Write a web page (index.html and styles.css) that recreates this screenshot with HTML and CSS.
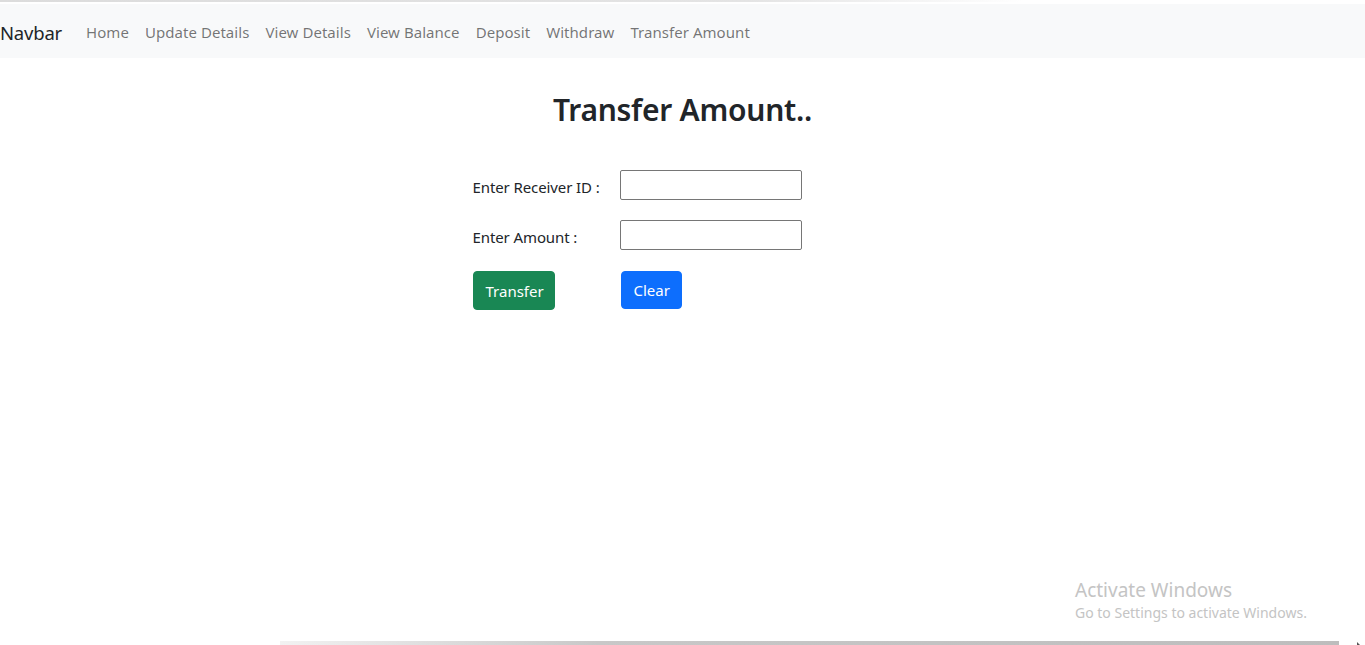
FILE: index.html
```html
<!DOCTYPE html>
<html lang="en">
<head>
<meta charset="utf-8">
<title>Transfer Amount</title>
<link rel="stylesheet" href="styles.css">
</head>
<body>
<div class="topline"></div>
<nav class="navbar">
  <a class="brand" href="#">Navbar</a>
  <ul class="nav-links">
    <li><a href="#">Home</a></li>
    <li><a href="#">Update Details</a></li>
    <li><a href="#">View Details</a></li>
    <li><a href="#">View Balance</a></li>
    <li><a href="#">Deposit</a></li>
    <li><a href="#">Withdraw</a></li>
    <li><a href="#">Transfer Amount</a></li>
  </ul>
</nav>
<main class="content">
  <h2 class="title">Transfer Amount..</h2>
  <form class="transfer-form">
    <label class="lbl" for="rid">Enter Receiver ID :</label>
    <input class="field" id="rid" type="text">
    <label class="lbl" for="amt">Enter Amount :</label>
    <input class="field" id="amt" type="text">
    <div class="btn-cell"><button type="button" class="btn btn-green">Transfer</button></div>
    <div class="btn-cell"><button type="button" class="btn btn-blue">Clear</button></div>
  </form>
</main>
<div class="watermark">
  <div class="wm-title">Activate Windows</div>
  <div class="wm-sub">Go to Settings to activate Windows.</div>
</div>
<div class="hscroll"><div class="hthumb"></div><span class="harrow"></span></div>
</body>
</html>
```
FILE: styles.css
```css
html, body {
  margin: 0;
  padding: 0;
  height: 100%;
  overflow: hidden;
}
body {
  font-family: "Noto Sans", "Open Sans", sans-serif;
  color: #212529;
  background: #fff;
  position: relative;
}
.topline {
  height: 2px;
  margin-bottom: 2px;
  background: linear-gradient(to right, #dcdcdc 0%, #e4e4e4 55%, rgba(255,255,255,0) 75%);
}
.navbar {
  height: 54px;
  background: #f8f9fa;
  display: flex;
  align-items: center;
  padding-top: 2px;
  box-sizing: border-box;
}
.brand {
  font-size: 18.5px;
  color: #212529;
  text-decoration: none;
  margin-right: 16px;
  letter-spacing: -0.2px;
}
.nav-links {
  list-style: none;
  display: flex;
  margin: 0;
  padding: 0;
}
.nav-links a {
  display: block;
  padding: 0 8px;
  font-size: 15px;
  color: rgba(0,0,0,0.55);
  text-decoration: none;
  letter-spacing: 0.05px;
}
.content {
  padding-top: 34px;
}
.title {
  margin: 0;
  text-align: center;
  font-size: 30px;
  font-weight: 600;
  letter-spacing: -0.25px;
  line-height: 1.2;
}
.transfer-form {
  width: 420px;
  margin: 42px auto 0;
  display: grid;
  grid-template-columns: 147px 182px;
  grid-template-rows: 30px 30px 39px;
  row-gap: 20px;
  align-items: center;
}
.lbl {
  font-size: 15px;
  padding-top: 4px;
  letter-spacing: -0.1px;
}
.field {
  box-sizing: border-box;
  width: 182px;
  height: 30px;
  border: 1px solid #767676;
  border-radius: 2px;
  background: #fff;
  margin: 0;
}
.btn-cell {
  align-self: start;
}
.btn {
  font-family: inherit;
  font-size: 15px;
  color: #fff;
  border: 1px solid transparent;
  border-radius: 4px;
  height: 39px;
  padding: 0 12px;
  cursor: pointer;
}
.btn-green {
  background: #198754;
  border-color: #198754;
  width: 82px;
  margin-top: 1px;
}
.btn-blue {
  background: #0d6efd;
  border-color: #0d6efd;
  width: 61px;
  height: 38px;
  margin-left: 1px;
  margin-top: 1px;
}
.watermark {
  position: absolute;
  left: 1075px;
  top: 577px;
  color: #c4c4c4;
}
.wm-title {
  font-size: 19px;
  line-height: 26px;
}
.wm-sub {
  font-size: 14px;
  line-height: 20px;
}
.hscroll {
  position: absolute;
  left: 0;
  right: 0;
  bottom: 0;
  height: 5px;
}
.hthumb {
  position: absolute;
  left: 280px;
  right: 26px;
  top: 1px;
  bottom: 0;
  background: linear-gradient(to right, #f2f2f2 0%, #c8c8c8 30%, #bdbdbd 100%);
}
.harrow {
  position: absolute;
  right: 5px;
  bottom: 0;
  width: 0;
  height: 0;
  border-left: 3px solid #555;
  border-top: 3px solid transparent;
  border-bottom: 0 solid transparent;
}
```
